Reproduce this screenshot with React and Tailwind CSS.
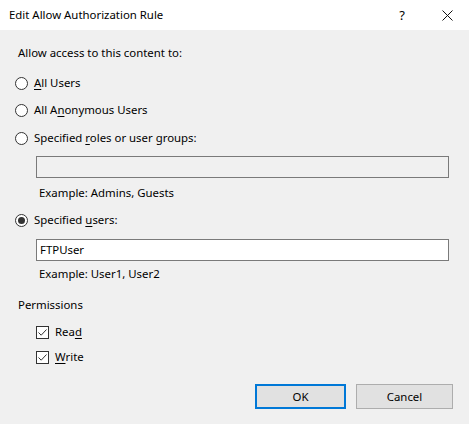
import React from "react";

const font = { fontFamily: '"Noto Sans", "Open Sans", sans-serif' };

function Radio({ checked }) {
  return (
    <span className="relative w-[13px] h-[13px] rounded-full border border-[#333333] bg-white flex items-center justify-center shrink-0">
      {checked && <span className="w-[7px] h-[7px] rounded-full bg-[#333333]" />}
    </span>
  );
}

function Check() {
  return (
    <span className="w-[13px] h-[13px] border border-[#333333] bg-white flex items-center justify-center shrink-0">
      <svg width="11" height="11" viewBox="0 0 11 11">
        <path d="M1.5 5.5 L4.2 8.2 L9.5 2.5" fill="none" stroke="#333333" strokeWidth="1" />
      </svg>
    </span>
  );
}

function U({ children }) {
  return <span className="underline underline-offset-[2px] decoration-1">{children}</span>;
}

export default function App() {
  return (
    <div className="w-[469px] h-[424px] bg-[#f0f0f0] text-[11.4px] leading-[16px] text-black flex flex-col" style={font}>
      <div className="h-[30px] bg-white flex items-center pl-[9px] pr-[16px] shrink-0">
        <span className="flex-1">Edit Allow Authorization Rule</span>
        <span className="w-[12px] text-center mr-[34px] text-[13px]">?</span>
        <svg width="11" height="11" viewBox="0 0 11 11">
          <path d="M0.5 0.5 L10.5 10.5 M10.5 0.5 L0.5 10.5" stroke="#111" strokeWidth="1" />
        </svg>
      </div>
      <div className="flex flex-col pl-[15px] pr-[20px]">
        <div className="mt-[15px] h-[16px] pl-[3px]">Allow access to this content to:</div>
        <div className="mt-[14px] h-[16px] flex items-center gap-[6px]">
          <Radio />
          <span><U>A</U>ll Users</span>
        </div>
        <div className="mt-[11px] h-[16px] flex items-center gap-[6px]">
          <Radio />
          <span>All A<U>n</U>onymous Users</span>
        </div>
        <div className="mt-[12px] h-[16px] flex items-center gap-[6px]">
          <Radio />
          <span>Specified <U>r</U>oles or user groups:</span>
        </div>
        <div className="mt-[10px] ml-[21px] h-[22px] border border-[#7a7a7a] bg-[#f0f0f0] w-[413px]" />
        <div className="mt-[7px] h-[16px] ml-[24px]">Example: Admins, Guests</div>
        <div className="mt-[11px] h-[16px] flex items-center gap-[6px]">
          <Radio checked />
          <span>Specified <U>u</U>sers:</span>
        </div>
        <div className="mt-[11px] ml-[21px] h-[22px] border border-[#7a7a7a] bg-white w-[413px] flex items-center pl-[3px]">
          FTPUser
        </div>
        <div className="mt-[5px] h-[16px] ml-[24px]">Example: User1, User2</div>
        <div className="mt-[15px] h-[16px] pl-[3px]">Permissions</div>
        <div className="mt-[11px] h-[16px] ml-[21px] flex items-center gap-[6px]">
          <Check />
          <span>Rea<U>d</U></span>
        </div>
        <div className="mt-[9px] h-[16px] ml-[21px] flex items-center gap-[6px]">
          <Check />
          <span><U>W</U>rite</span>
        </div>
        <div className="mt-[19px] flex justify-end gap-[10px] mr-[-4px]">
          <button className="w-[91px] h-[25px] border-2 border-[#0078d7] bg-[#e1e1e1] flex items-center justify-center" style={font}>OK</button>
          <button className="w-[97px] h-[25px] border border-[#adadad] bg-[#e1e1e1] flex items-center justify-center" style={font}>Cancel</button>
        </div>
      </div>
    </div>
  );
}
